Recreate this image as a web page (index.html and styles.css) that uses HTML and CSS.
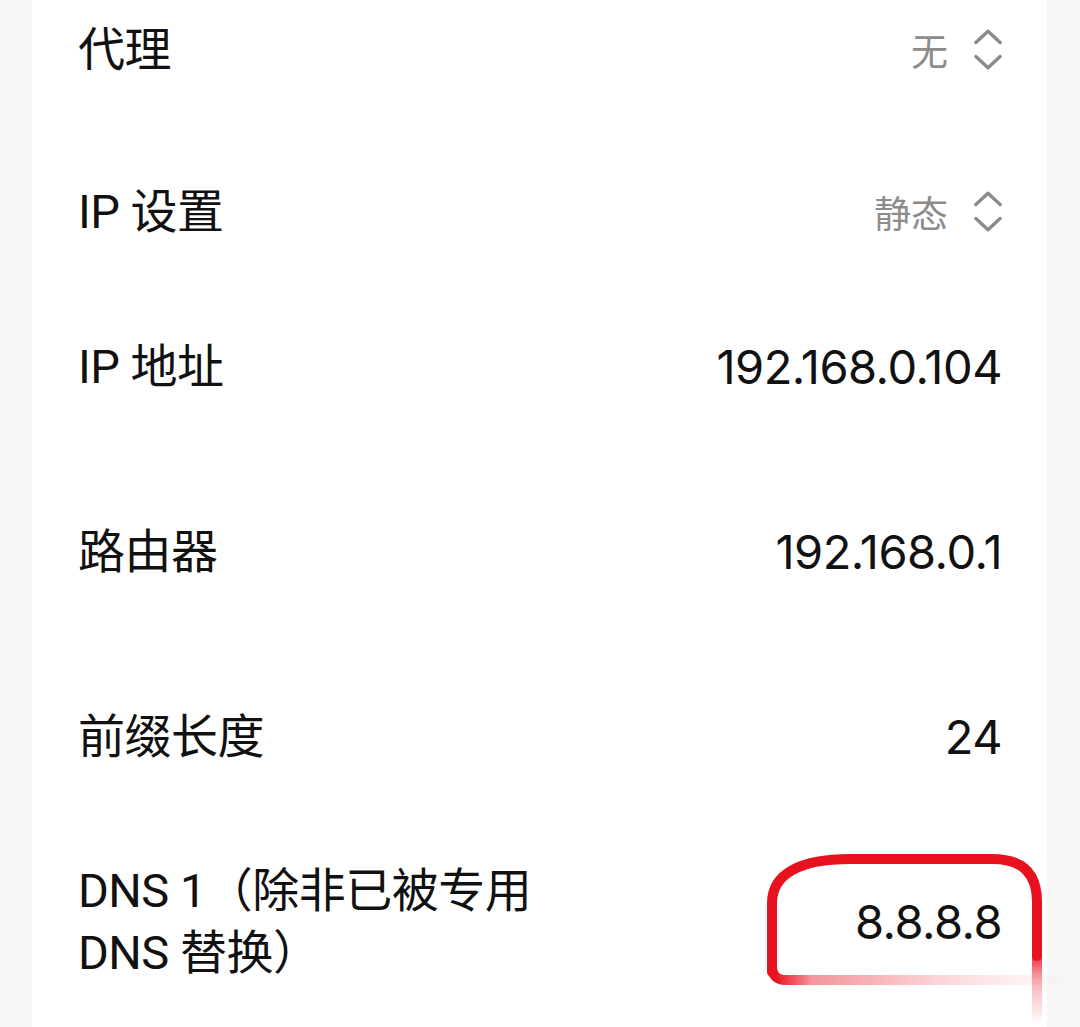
FILE: index.html
```html
<!DOCTYPE html>
<html lang="zh-CN">
<head>
    <meta charset="UTF-8">
    <meta name="viewport" content="width=device-width, initial-scale=1.0">
    <title>IP 设置</title>
    <link rel="stylesheet" href="styles.css">
</head>
<body>
    <div class="settings-card">
        <div class="row row-first">
            <div class="label">代理</div>
            <div class="picker">
                <span class="picker-value">无</span>
                <svg class="chevrons" viewBox="0 0 30 44" xmlns="http://www.w3.org/2000/svg">
                    <polyline points="2,14 15,2 28,14"/>
                    <polyline points="2,29 15,41 28,29"/>
                </svg>
            </div>
        </div>

        <div class="row row-picker">
            <div class="label">IP 设置</div>
            <div class="picker">
                <span class="picker-value">静态</span>
                <svg class="chevrons" viewBox="0 0 30 44" xmlns="http://www.w3.org/2000/svg">
                    <polyline points="2,14 15,2 28,14"/>
                    <polyline points="2,29 15,41 28,29"/>
                </svg>
            </div>
        </div>

        <div class="row">
            <div class="label">IP 地址</div>
            <div class="value">192.168.0.104</div>
        </div>

        <div class="row">
            <div class="label">路由器</div>
            <div class="value">192.168.0.1</div>
        </div>

        <div class="row">
            <div class="label">前缀长度</div>
            <div class="value">24</div>
        </div>

        <div class="row">
            <div class="label label-wrap">DNS 1（除非已被专用<br>DNS 替换）</div>
            <div class="value">8.8.8.8</div>
        </div>
    </div>

    <!-- hand-drawn red mark around the DNS value -->
    <svg class="annotation" viewBox="0 0 1080 1027" xmlns="http://www.w3.org/2000/svg">
        <defs>
            <linearGradient id="fadeRight" gradientUnits="userSpaceOnUse" x1="776" y1="0" x2="1070" y2="0">
                <stop offset="0%" stop-color="#e8121f" stop-opacity="1"/>
                <stop offset="12%" stop-color="#e8121f" stop-opacity="0.45"/>
                <stop offset="60%" stop-color="#e8121f" stop-opacity="0.15"/>
                <stop offset="100%" stop-color="#e8121f" stop-opacity="0"/>
            </linearGradient>
            <linearGradient id="fadeDown" gradientUnits="userSpaceOnUse" x1="0" y1="950" x2="0" y2="1024">
                <stop offset="0%" stop-color="#e8121f" stop-opacity="1"/>
                <stop offset="40%" stop-color="#e8121f" stop-opacity="0.35"/>
                <stop offset="100%" stop-color="#e8121f" stop-opacity="0"/>
            </linearGradient>
        </defs>
        <path class="mark" d="M772,972 L772,903 C772,874 800,859 850,859 L992,859 C1024,859 1037,875 1037,902 L1037,956" stroke="#e8121f"/>
        <path class="mark" d="M772,966 Q772,980 786,980 L1068,980" stroke="url(#fadeRight)"/>
        <path class="mark" d="M1037,952 L1037,1022" stroke="url(#fadeDown)"/>
    </svg>
</body>
</html>
```

FILE: styles.css
```css
body {
    margin: 0;
    padding: 0;
    background: #f7f7f7;
    font-family: Roboto, "Noto Sans CJK SC", sans-serif;
    color: #111111;
    width: 1080px;
    height: 1027px;
    overflow: hidden;
    position: relative;
}

.settings-card {
    margin: 0 33px 0 32px;
    background: #ffffff;
    padding: 0 45px 0 46px;
    height: 1027px;
}

.row {
    display: flex;
    align-items: center;
    justify-content: space-between;
    height: 185px;
}

.row-first {
    height: 100px;
}

.row-picker {
    margin-top: 50px;
    height: 124px;
}

.label {
    font-size: 47px;
    line-height: 62px;
    letter-spacing: -0.5px;
}

.value {
    font-family: Inter, Roboto, sans-serif;
    font-size: 47px;
    line-height: 62px;
    letter-spacing: -0.5px;
}

.picker {
    display: flex;
    align-items: center;
    gap: 26px;
}

.picker-value {
    font-size: 37px;
    color: #8c8c8c;
}

.chevrons {
    width: 28px;
    height: 42px;
    fill: none;
    stroke: #8a8a8a;
    stroke-width: 3.6;
    stroke-linecap: round;
    stroke-linejoin: round;
}

.annotation {
    position: absolute;
    top: 0;
    left: 0;
    width: 1080px;
    height: 1027px;
    pointer-events: none;
}

.mark {
    fill: none;
    stroke-width: 10;
    stroke-linecap: round;
    stroke-linejoin: round;
}
```
